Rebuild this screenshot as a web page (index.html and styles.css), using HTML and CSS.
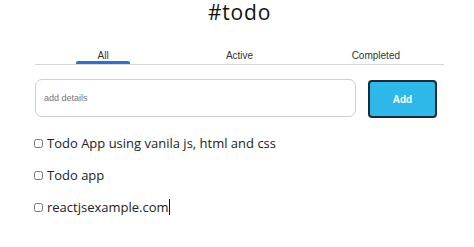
FILE: index.html
```html
<!DOCTYPE html>
<html>
<head>
<meta charset="utf-8">
<link rel="stylesheet" href="styles.css">
</head>
<body>
<div class="app">
  <h1 class="title">#todo</h1>
  <div class="tabs">
    <div class="tab active">All</div>
    <div class="tab">Active</div>
    <div class="tab">Completed</div>
  </div>
  <form class="add-row">
    <input class="details" type="text" placeholder="add details">
    <button class="add-btn" type="button">Add</button>
  </form>
  <ul class="list">
    <li class="item"><input type="checkbox" class="check"><span>Todo App using vanila js, html and css</span></li>
    <li class="item"><input type="checkbox" class="check"><span>Todo app</span></li>
    <li class="item"><input type="checkbox" class="check"><span>reactjsexample.com</span><span class="caret"></span></li>
  </ul>
</div>
</body>
</html>
```
FILE: styles.css
```css
html, body {
  margin: 0;
  padding: 0;
  background: #ffffff;
}
.app {
  width: 409px;
  margin-left: 35px;
  font-family: "Open Sans", sans-serif;
  color: #111;
}
.title {
  margin: 0;
  padding-top: 1px;
  text-align: center;
  font-size: 21px;
  letter-spacing: 0.8px;
  font-weight: 500;
  line-height: 22px;
  height: 22px;
  color: #111;
}
.tabs {
  display: flex;
  margin-top: 26px;
  border-bottom: 1px solid #d6d6d6;
  font-family: "Liberation Sans", Arial, sans-serif;
  font-size: 10px;
  color: #333;
}
.tab {
  flex: 1;
  text-align: center;
  height: 15px;
  line-height: 13px;
  position: relative;
}
.tab.active::after {
  content: "";
  position: absolute;
  left: 41px;
  right: 41px;
  bottom: 0;
  height: 3px;
  background: #2f6fd0;
  border-radius: 2px 2px 0 0;
}
.add-row {
  display: flex;
  margin: 14px 0 0 0;
  gap: 12px;
  align-items: flex-start;
}
.details {
  width: 321px;
  height: 38px;
  box-sizing: border-box;
  border: 1px solid #d0d0d0;
  border-radius: 7px;
  padding: 0 8px;
  font-family: "Liberation Sans", Arial, sans-serif;
  font-size: 9px;
  outline: none;
}
.details::placeholder {
  color: #777;
}
.add-btn {
  width: 69px;
  height: 38px;
  margin-top: 1px;
  box-sizing: border-box;
  background: #2eb8ea;
  border: 2px solid #1b2a38;
  border-radius: 4px;
  color: #fff;
  font-family: "Liberation Sans", Arial, sans-serif;
  font-weight: 700;
  font-size: 10px;
  padding: 0;
}
.list {
  list-style: none;
  margin: 9px 0 0 0;
  padding: 0;
}
.item {
  display: flex;
  align-items: center;
  height: 32px;
  font-size: 13px;
  color: #222;
}
.check {
  width: 9px;
  height: 9px;
  margin: 0 4px 0 -1px;
}
.caret {
  display: inline-block;
  width: 1px;
  height: 16px;
  background: #111;
}
```
